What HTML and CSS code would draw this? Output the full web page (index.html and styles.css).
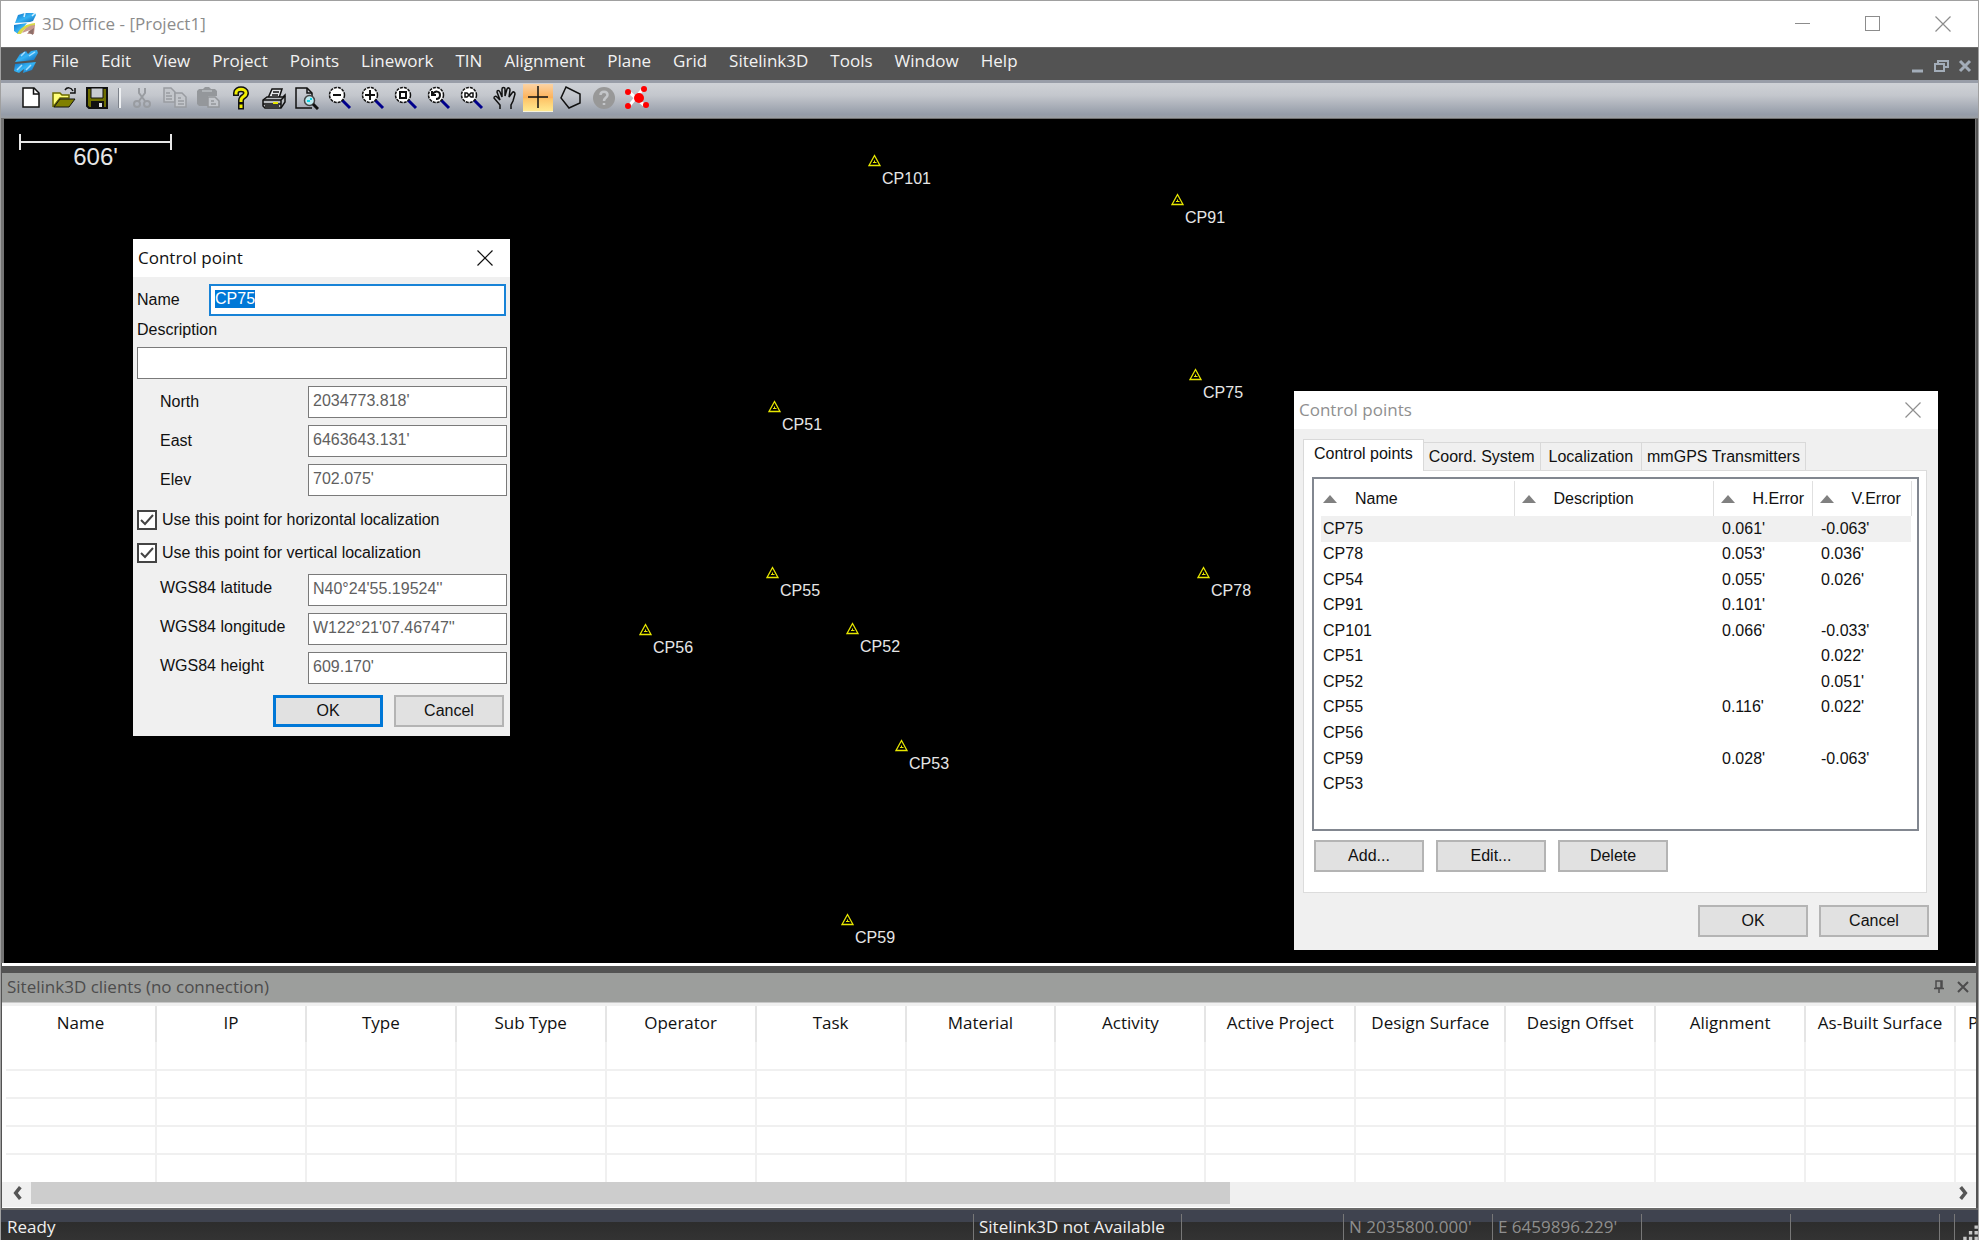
FILE: index.html
```html
<!DOCTYPE html>
<html lang="en">
<head>
<meta charset="utf-8">
<title>3D Office - [Project1]</title>
<link rel="stylesheet" href="styles.css">
</head>
<body>
<svg class="defs" aria-hidden="true">
  <defs>
    <linearGradient id="blue" x1="0" y1="0" x2="1" y2="1">
      <stop offset="0" stop-color="#0d6fc4"/><stop offset=".5" stop-color="#35b4f5"/><stop offset="1" stop-color="#0a5cae"/>
    </linearGradient>
    <symbol id="cone" viewBox="0 0 14 13">
      <path d="M6.500 1.500L12 11.500H1Z" fill="none" stroke="#e6e600" stroke-width="1.300"/>
      <path d="M6.500 6.500V8M5 8.500H8.500" fill="none" stroke="#e6e600"/>
    </symbol>
    <symbol id="lens" viewBox="0 0 24 24">
      <path d="M14 14L22 22" stroke="#00008b" stroke-width="3"/>
      <circle cx="9" cy="9" r="7.500" fill="#fff" stroke="#111" stroke-width="1.500" stroke-dasharray="3 1"/>
    </symbol>
    <symbol id="close" viewBox="0 0 16 16">
      <path d="M.5.5L15.500 15.500M15.500.5L.5 15.500" fill="none" stroke="currentColor" stroke-width="1.200"/>
    </symbol>
  </defs>
</svg>

<div class="app">
  <header class="titlebar">
    <svg class="logo" viewBox="0 0 24 24" aria-hidden="true">
      <path d="M5 3L12 1H22L23 3 20 9 17 10 2 11Z" fill="url(#blue)"/>
      <path d="M12 1L11 5M22 1L19 4" stroke="#d6f1ff" stroke-width="1.500"/>
      <path d="M1 13L14 11 5 22 1 19Z" fill="url(#blue)"/>
      <path d="M4 22C8 15 13 12 22 11L22 14C15 14 11 17 8 22Z" fill="#d8d84a"/>
      <path d="M9 21C12 16 16 13 22 13L21 22 14 22 17 18Z" fill="#c99a90"/>
      <path d="M15 20L21 16 20 23Z" fill="#8d6f6a"/>
    </svg>
    <h1 class="app-title">3D Office - [Project1]</h1>
    <div class="window-controls">
      <button type="button" aria-label="Minimize"><svg viewBox="0 0 16 16"><path d="M0 7.500H15" stroke="currentColor"/></svg></button>
      <button type="button" aria-label="Maximize"><svg viewBox="0 0 16 16"><rect x=".5" y=".5" width="14" height="14" fill="none" stroke="currentColor"/></svg></button>
      <button type="button" aria-label="Close"><svg><use href="#close"/></svg></button>
    </div>
  </header>

  <nav class="menubar">
    <svg class="logo" viewBox="0 0 24 24" aria-hidden="true">
      <path d="M6 4L12 1 14 4 17 1 23 0 24 3 20 10 1 12Z" fill="url(#blue)"/>
      <path d="M1 14L22 12 18 20 9 23 10 19 5 23 0 21Z" fill="url(#blue)"/>
      <path d="M7 6L11 2M15 6L21 2M3 20L8 15M12 20L17 15" fill="none" stroke="#a9e0ff" stroke-width="1.500"/>
    </svg>
    <div class="menus">
      <button type="button">File</button>
      <button type="button">Edit</button>
      <button type="button">View</button>
      <button type="button">Project</button>
      <button type="button">Points</button>
      <button type="button">Linework</button>
      <button type="button">TIN</button>
      <button type="button">Alignment</button>
      <button type="button">Plane</button>
      <button type="button">Grid</button>
      <button type="button">Sitelink3D</button>
      <button type="button">Tools</button>
      <button type="button">Window</button>
      <button type="button">Help</button>
    </div>
    <div class="child-controls">
      <button type="button" aria-label="Minimize project"><svg viewBox="0 0 16 14"><path d="M3 12H14" stroke="currentColor" stroke-width="3"/></svg></button>
      <button type="button" aria-label="Restore project"><svg viewBox="0 0 16 14"><path d="M5 4V2H15V8H12M2 5H11V12H2Z" fill="none" stroke="currentColor" stroke-width="2"/></svg></button>
      <button type="button" aria-label="Close project"><svg viewBox="0 0 16 14"><path d="M3 2L13 12M13 2L3 12" stroke="currentColor" stroke-width="3"/></svg></button>
    </div>
  </nav>

  <div class="toolbar" role="toolbar">
    <button type="button" aria-label="New"><svg viewBox="0 0 24 24"><path d="M4 2H15L20 7V21H4Z" fill="#fff" stroke="#111" stroke-width="1.500"/><path d="M14.500 2V8H20" fill="none" stroke="#111" stroke-width="1.500"/></svg></button>
    <button type="button" aria-label="Open"><svg viewBox="0 0 24 24"><path d="M1 21V7H8L10 9H17V12H8L1 21" fill="#ffff7a" stroke="#6b6b00" stroke-width="1.500"/><path d="M2 21L8 13H23L17 21Z" fill="#808000" stroke="#111"/><path d="M13 4C15 1 19 1 21 5M23 2V7H18" fill="none" stroke="#111" stroke-width="1.500"/></svg></button>
    <button type="button" aria-label="Save"><svg viewBox="0 0 24 24"><path d="M2 2H22V22H4L2 20Z" fill="#6f6f00" stroke="#111" stroke-width="2"/><path d="M6 2H18V12H6Z" fill="#c9ccd1" stroke="#111"/><path d="M6 15H19V22H6Z" fill="#111"/><path d="M14 17H17V21H14Z" fill="#ddd"/></svg></button>
    <span class="tool-separator"></span>
    <button type="button" disabled aria-label="Cut"><svg viewBox="0 0 24 24" fill="none" stroke="#999ca1" stroke-width="2"><path d="M9 2V7L15 15M15 2V7L9 15"/><circle cx="7" cy="18" r="3"/><circle cx="17" cy="18" r="3"/></svg></button>
    <button type="button" disabled aria-label="Copy"><svg viewBox="0 0 24 24" fill="#c3c6cb" stroke="#999ca1" stroke-width="1.500"><path d="M1 2H8L12 6V16H1Z"/><path d="M3 7H7M3 10H9M3 13H9"/><path d="M12 7H19L23 11V21H12Z"/><path d="M15 12H18M15 15H21M15 18H21"/></svg></button>
    <button type="button" disabled aria-label="Paste"><svg viewBox="0 0 24 24"><path d="M1 5L3 3H7L9 1H13L15 3H19L21 5V10H12V20H3L1 18Z" fill="#94979b"/><path d="M6 5H16" stroke="#b9bcc1" stroke-width="1.500"/><path d="M12 11H19L23 15V21H12Z" fill="#c3c6cb" stroke="#94979b" stroke-width="1.500"/><path d="M15 15H18M15 18H20" stroke="#94979b" stroke-width="1.500"/></svg></button>
    <button type="button" aria-label="Help"><svg viewBox="0 0 24 24" fill="none" stroke-linecap="square"><path d="M7 7C7 2 17 2 17 7C17 11 12 10 12 14.500M12 20V20.500" stroke="#111" stroke-width="6"/><path d="M7 7C7 2 17 2 17 7C17 11 12 10 12 14.500M12 20V20.500" stroke="#f2ee00" stroke-width="3"/></svg></button>
    <button type="button" aria-label="Print"><svg viewBox="0 0 24 24" fill="none" stroke="#111" stroke-width="1.500"><path d="M6 12L10 3H20L17 12Z" fill="#e4e6e9"/><path d="M11 6H17M10 9H16"/><path d="M1 14L5 11H21L23 9V16L19 22H3L1 20Z" fill="#b9bcc0"/><path d="M1 14H19L23 10M19 14V22M1 18H19M3 20H17" /><path d="M11 17H16" stroke="#e6e600" stroke-width="2"/></svg></button>
    <button type="button" aria-label="Print preview"><svg viewBox="0 0 24 24"><path d="M17 10V7L12 2H1V22H17" fill="none" stroke="#111" stroke-width="1.500"/><path d="M12 2V7H17" fill="none" stroke="#111" stroke-width="1.500"/><circle cx="14.500" cy="14.500" r="5" fill="#bfeaf0" stroke="#444" stroke-width="1.500"/><path d="M12 15H15M15 13H17" stroke="#12d4e6" stroke-width="2"/><path d="M18 18L23 23" stroke="#111" stroke-width="3"/></svg></button>
    <button type="button" aria-label="Zoom out"><svg viewBox="0 0 24 24"><use href="#lens"/><path d="M5 9H13" stroke="#111" stroke-width="2"/></svg></button>
    <button type="button" aria-label="Zoom in"><svg viewBox="0 0 24 24"><use href="#lens"/><path d="M4 9H14M9 4V14" stroke="#111" stroke-width="2"/></svg></button>
    <button type="button" aria-label="Zoom window"><svg viewBox="0 0 24 24"><use href="#lens"/><path d="M6 6H12V12H6Z" fill="none" stroke="#111" stroke-width="2"/></svg></button>
    <button type="button" aria-label="Zoom previous"><svg viewBox="0 0 24 24"><use href="#lens"/><path d="M5 5V9H9M5 9C8 4 13 5 13 9C13 12 11 13 9 13" fill="none" stroke="#111" stroke-width="2"/></svg></button>
    <button type="button" aria-label="Zoom extents"><svg viewBox="0 0 24 24"><use href="#lens"/><path d="M9 9L7 7H5V11H7L11 7H13V11H11Z" fill="none" stroke="#111" stroke-width="1.500"/></svg></button>
    <button type="button" aria-label="Pan"><svg viewBox="0 0 24 24"><path d="M7 23V19L1 12C1 10 3 10 4 11L7 14L4 6C4 4 6 4 7 6L9 11V3C9 1 12 1 12 3V10L14 3C15 1 17 2 17 4L16 11L19 7C20 5 22 6 22 8L20 15L18 19V23" fill="none" stroke="#111" stroke-width="1.500"/></svg></button>
    <button type="button" class="active" aria-label="Select point" aria-pressed="true"><svg viewBox="0 0 24 24"><path d="M2 12H22M12 1V23" stroke="#111" stroke-width="1.500"/></svg></button>
    <button type="button" aria-label="Select area"><svg viewBox="0 0 24 24"><path d="M7 1L2 12L10 22L21 17V8Z" fill="none" stroke="#111" stroke-width="1.500"/></svg></button>
    <button type="button" disabled aria-label="Query"><svg viewBox="0 0 24 24"><circle cx="12" cy="12" r="11" fill="#989898"/><path d="M8.500 9C8.500 4.500 15.500 4.500 15.500 9C15.500 11.500 12 11.500 12 15M12 17V19" fill="none" stroke="#c4c6c9" stroke-width="2.500"/></svg></button>
    <button type="button" aria-label="Network"><svg viewBox="0 0 24 24"><path d="M4 20L17 4M4 6L19 19" stroke="#fff" stroke-width="3"/><g fill="#f00"><circle cx="14" cy="12" r="5"/><circle cx="3" cy="6" r="3"/><circle cx="19" cy="3" r="3"/><circle cx="3" cy="20" r="3"/><circle cx="21" cy="19" r="3"/></g></svg></button>
  </div>

  <main class="canvas">
    <div class="scale"><div class="scale-bar"></div><span>606'</span></div>

    <div class="point" style="left:864px;top:35px"><svg><use href="#cone"/></svg><span>CP101</span></div>
    <div class="point" style="left:1167px;top:74px"><svg><use href="#cone"/></svg><span>CP91</span></div>
    <div class="point" style="left:1185px;top:249px"><svg><use href="#cone"/></svg><span>CP75</span></div>
    <div class="point" style="left:764px;top:281px"><svg><use href="#cone"/></svg><span>CP51</span></div>
    <div class="point" style="left:762px;top:447px"><svg><use href="#cone"/></svg><span>CP55</span></div>
    <div class="point" style="left:635px;top:504px"><svg><use href="#cone"/></svg><span>CP56</span></div>
    <div class="point" style="left:842px;top:503px"><svg><use href="#cone"/></svg><span>CP52</span></div>
    <div class="point" style="left:1193px;top:447px"><svg><use href="#cone"/></svg><span>CP78</span></div>
    <div class="point" style="left:891px;top:620px"><svg><use href="#cone"/></svg><span>CP53</span></div>
    <div class="point" style="left:837px;top:794px"><svg><use href="#cone"/></svg><span>CP59</span></div>

    <form class="dialog edit-dialog" aria-label="Control point">
      <div class="dialog-title">
        <h2>Control point</h2>
        <button type="button" aria-label="Close"><svg><use href="#close"/></svg></button>
      </div>
      <div class="edit-body">
        <div class="row name-row"><label for="name">Name</label><input id="name" type="text" value="CP75" autofocus></div>
        <label class="desc-label" for="desc">Description</label>
        <input id="desc" type="text">
        <div class="fields">
          <label for="north">North</label><input id="north" type="text" value="2034773.818'" readonly>
          <label for="east">East</label><input id="east" type="text" value="6463643.131'" readonly>
          <label for="elev">Elev</label><input id="elev" type="text" value="702.075'" readonly>
        </div>
        <label class="check"><input type="checkbox" checked>Use this point for horizontal localization</label>
        <label class="check"><input type="checkbox" checked>Use this point for vertical localization</label>
        <div class="fields wgs">
          <label for="lat">WGS84 latitude</label><input id="lat" type="text" value="N40°24'55.19524''" readonly>
          <label for="lon">WGS84 longitude</label><input id="lon" type="text" value="W122°21'07.46747''" readonly>
          <label for="hgt">WGS84 height</label><input id="hgt" type="text" value="609.170'" readonly>
        </div>
        <div class="actions"><button type="button" class="btn default">OK</button><button type="button" class="btn">Cancel</button></div>
      </div>
    </form>

    <section class="dialog list-dialog inactive" aria-label="Control points">
      <div class="dialog-title">
        <h2>Control points</h2>
        <button type="button" aria-label="Close"><svg><use href="#close"/></svg></button>
      </div>
      <div class="list-body">
        <div class="tabs" role="tablist">
          <button type="button" role="tab" aria-selected="true">Control points</button>
          <button type="button" role="tab">Coord. System</button>
          <button type="button" role="tab">Localization</button>
          <button type="button" role="tab">mmGPS Transmitters</button>
        </div>
        <div class="tab-panel" role="tabpanel">
          <div class="list-box">
            <table class="points">
              <colgroup><col class="c-name"><col class="c-desc"><col class="c-err"><col class="c-err"></colgroup>
              <thead><tr><th><span class="sort">Name</span></th><th><span class="sort">Description</span></th><th><span class="sort">H.Error</span></th><th><span class="sort">V.Error</span></th></tr></thead>
              <tbody>
                <tr class="selected"><td>CP75</td><td></td><td>0.061'</td><td>-0.063'</td></tr>
                <tr><td>CP78</td><td></td><td>0.053'</td><td>0.036'</td></tr>
                <tr><td>CP54</td><td></td><td>0.055'</td><td>0.026'</td></tr>
                <tr><td>CP91</td><td></td><td>0.101'</td><td></td></tr>
                <tr><td>CP101</td><td></td><td>0.066'</td><td>-0.033'</td></tr>
                <tr><td>CP51</td><td></td><td></td><td>0.022'</td></tr>
                <tr><td>CP52</td><td></td><td></td><td>0.051'</td></tr>
                <tr><td>CP55</td><td></td><td>0.116'</td><td>0.022'</td></tr>
                <tr><td>CP56</td><td></td><td></td><td></td></tr>
                <tr><td>CP59</td><td></td><td>0.028'</td><td>-0.063'</td></tr>
                <tr><td>CP53</td><td></td><td></td><td></td></tr>
              </tbody>
            </table>
          </div>
          <div class="list-actions"><button type="button" class="btn">Add...</button><button type="button" class="btn">Edit...</button><button type="button" class="btn">Delete</button></div>
        </div>
        <div class="actions"><button type="button" class="btn">OK</button><button type="button" class="btn">Cancel</button></div>
      </div>
    </section>
  </main>

  <section class="panel">
    <div class="panel-title">
      <h2>Sitelink3D clients (no connection)</h2>
      <button type="button" aria-label="Auto hide"><svg viewBox="0 0 14 14"><path d="M4 1H10V8H4ZM9 1V8M2 8.500H12M7 9V13" fill="none" stroke="currentColor" stroke-width="1.500"/></svg></button>
      <button type="button" aria-label="Close panel"><svg viewBox="0 0 14 14"><path d="M2 2L12 12M12 2L2 12" stroke="currentColor" stroke-width="2"/></svg></button>
    </div>
    <div class="clients-wrap">
      <table class="clients">
        <thead><tr><th>Name</th><th>IP</th><th>Type</th><th>Sub Type</th><th>Operator</th><th>Task</th><th>Material</th><th>Activity</th><th>Active Project</th><th>Design Surface</th><th>Design Offset</th><th>Alignment</th><th>As-Built Surface</th><th class="cut">P</th></tr></thead>
        <tbody>
          <tr><td></td><td></td><td></td><td></td><td></td><td></td><td></td><td></td><td></td><td></td><td></td><td></td><td></td><td></td></tr>
          <tr><td></td><td></td><td></td><td></td><td></td><td></td><td></td><td></td><td></td><td></td><td></td><td></td><td></td><td></td></tr>
          <tr><td></td><td></td><td></td><td></td><td></td><td></td><td></td><td></td><td></td><td></td><td></td><td></td><td></td><td></td></tr>
          <tr><td></td><td></td><td></td><td></td><td></td><td></td><td></td><td></td><td></td><td></td><td></td><td></td><td></td><td></td></tr>
          <tr><td></td><td></td><td></td><td></td><td></td><td></td><td></td><td></td><td></td><td></td><td></td><td></td><td></td><td></td></tr>
        </tbody>
      </table>
    </div>
    <div class="scrollbar">
      <button type="button" aria-label="Scroll left"><svg viewBox="0 0 12 12"><path d="M8 1L4 6L8 11" fill="none" stroke="currentColor" stroke-width="3"/></svg></button>
      <div class="track"><div class="thumb"></div></div>
      <button type="button" aria-label="Scroll right"><svg viewBox="0 0 12 12"><path d="M4 1L8 6L4 11" fill="none" stroke="currentColor" stroke-width="3"/></svg></button>
    </div>
  </section>

  <footer class="status">
    <span class="ready">Ready</span>
    <span class="w-link">Sitelink3D not Available</span>
    <span class="w-wide"></span>
    <span class="w-coord dim">N 2035800.000'</span>
    <span class="w-coord dim">E 6459896.229'</span>
    <span class="w-coord"></span>
    <span class="w-coord"></span>
    <span class="w-tiny"></span>
    <span class="w-grip"><svg viewBox="0 0 16 16" aria-hidden="true"><path d="M12 3h3v3h-3zM12 8h3v3h-3zM7 8h3v3h-3zM12 13h3v3h-3zM7 13h3v3h-3zM2 13h3v3h-3z" fill="#c8c8c8"/></svg></span>
  </footer>
</div>
<script src="app.js"></script>
</body>
</html>
```
FILE: styles.css
```css
* { box-sizing: border-box; }

body {
  margin: 0;
  font-family: "Open Sans", "Noto Sans", sans-serif;
  font-size: 17px;
  line-height: 24px;
}

button {
  border: 0;
  padding: 0;
  background: none;
  font: inherit;
  color: inherit;
}

h1, h2 { margin: 0; font-size: 17px; font-weight: 400; }
svg { display: block; }
.defs { position: absolute; width: 0; height: 0; }

.app {
  display: flex;
  flex-direction: column;
  min-height: 100vh;
  border: 1px solid #a0a0a0;
  border-bottom: 0;
  background: #535353;
  overflow: hidden;
}

/* Window title */
.titlebar {
  display: flex;
  align-items: center;
  height: 46px;
  padding-left: 12px;
  background: #fff;
  color: #8c8c8c;
}
.logo { width: 24px; height: 24px; flex: none; }
.app-title { flex: 1; padding-left: 5px; }
.window-controls { display: flex; color: #8c8c8c; }
.window-controls button { width: 70px; height: 44px; display: grid; place-items: center; }
.window-controls svg { width: 16px; height: 16px; }

/* Menu */
.menubar {
  display: flex;
  align-items: center;
  height: 33px;
  padding: 0 3px 4px 13px;
  border-top: 1px solid #6a6a6a;
  background: #535353;
  color: #f2f2f2;
}
.menus { display: flex; flex: 1; gap: 22px; padding-left: 14px; }
.menus button { height: 26px; padding-bottom: 2px; }
.child-controls { display: flex; align-self: flex-end; gap: 4px; color: #a3adb9; }
.child-controls button { width: 20px; height: 17px; display: grid; place-items: start center; }
.child-controls svg { width: 16px; height: 14px; }

/* Toolbar */
.toolbar {
  display: flex;
  align-items: center;
  gap: 3px;
  height: 39px;
  padding: 0 15px 6px;
  border-top: 3px solid #989da8;
  border-bottom: 1px solid #6e6e6e;
  background: linear-gradient(#cfd2d7, #c4c7cd 35%, #959ca8 90%, #9a9ea3);
}
.toolbar button { width: 30px; height: 28px; display: grid; place-items: center; }
.toolbar svg { width: 24px; height: 24px; }
.toolbar .active {
  background: linear-gradient(#fbd3a4, #fdb35c 50%, #fdc468 55%, #ffe98f);
  border-bottom: 1px solid #f7f3dc;
}
.tool-separator { width: 3px; height: 20px; margin: 0 3px; border-left: 1px solid #7d828b; background: #eef0f2; }

/* Drawing area */
.canvas {
  position: relative;
  flex: 1;
  min-height: 843px;
  margin: 0 2px 0 0;
  border: solid #747474;
  border-width: 0 1px 0 3px;
  background: #000;
  color: #e6e6e6;
  font: 16px/20px "Liberation Sans", Arial, sans-serif;
}
.scale { position: absolute; left: 15px; top: 15px; width: 153px; text-align: center; font-size: 24px; line-height: 28px; }
.scale-bar { height: 16px; margin-bottom: -7px; border: solid #e6e6e6; border-width: 0 2px; background: linear-gradient(#e6e6e6, #e6e6e6) center / 100% 2px no-repeat; }
.point { position: absolute; display: grid; gap: 2px; }
.point svg { width: 14px; height: 13px; }
.point span { padding-left: 14px; }

/* Dialogs */
.dialog { position: absolute; background: #f0f0f0; color: #111; font-size: 16px; }
.dialog-title {
  display: flex;
  justify-content: space-between;
  align-items: center;
  height: 38px;
  padding: 0 17px 0 5px;
  background: #fff;
  font-family: "Open Sans", "Noto Sans", sans-serif;
}
.dialog-title svg { width: 16px; height: 16px; }
.dialog.inactive .dialog-title { color: #8f8f8f; }
.btn {
  width: 110px;
  height: 32px;
  border: 2px solid #b4b4b4;
  background: #e1e1e1;
}
.btn.default { border: 3px solid #0078d7; }
.actions { display: flex; justify-content: flex-end; gap: 11px; }

.edit-dialog { left: 129px; top: 120px; width: 377px; }
.edit-body { padding: 7px 3px 9px 4px; }
.edit-body input[type="text"] {
  width: 100%;
  height: 32px;
  padding: 0 4px 2px;
  border: 1px solid #7a7a7a;
  border-radius: 0;
  background: #fff;
  color: #111;
  font: inherit;
  outline: 0;
}
.edit-body input[readonly] { color: #606060; }
.name-row { display: grid; grid-template-columns: 72px 1fr; align-items: center; padding-right: 1px; }
.edit-body #name { border: 2px solid #1883d7; }
#name::selection { background: #0078d7; color: #fff; }
.desc-label { display: block; padding: 4px 0 7px; }
.fields {
  display: grid;
  grid-template-columns: 148px 1fr;
  gap: 7px 0;
  padding: 7px 0 7px 23px;
  align-items: center;
}
.fields.wgs { padding-top: 5px; }
.fields.wgs label { padding-bottom: 4px; }
.check { display: flex; align-items: center; gap: 5px; height: 33px; }
.check input {
  appearance: none;
  width: 20px;
  height: 20px;
  margin: 0;
  border: 2px solid #444;
  background: #fff url("data:image/svg+xml,%3Csvg xmlns='http://www.w3.org/2000/svg' viewBox='0 0 16 16'%3E%3Cpath d='M2 8l4 4 8-9' fill='none' stroke='%23444' stroke-width='2'/%3E%3C/svg%3E") center / 16px;
}
.edit-dialog .actions { padding: 4px 3px 0 0; }

.list-dialog { left: 1290px; top: 272px; width: 644px; }
.list-body { padding: 10px 9px 13px 9px; }
.tabs { display: flex; align-items: flex-end; }
.tabs button {
  height: 28px;
  padding: 0 5px;
  border: 1px solid #d9d9d9;
  border-width: 1px 1px 0 0;
  white-space: nowrap;
}
.tabs [aria-selected="true"] { height: 32px; padding: 0 10px 4px; border-left-width: 1px; background: #fff; margin-bottom: -1px; }
.tabs button:nth-child(3) { padding: 0 8px; }
.tab-panel { margin-right: 2px; padding: 6px 7px 20px 8px; border: 1px solid #dcdcdc; background: #fff; }
.list-box { height: 354px; padding: 2px 7px 0; border: 2px solid #828790; }
.points { width: 100%; height: 316px; table-layout: fixed; border-collapse: collapse; }
.points th { height: 35px; padding: 0 0 0 7px; border-right: 1px solid #e0e0e0; font-weight: 400; text-align: left; }
.points td { padding: 0 0 0 9px; }
.points th:first-child, .points td:first-child { padding-left: 2px; }
.points .selected { background: #f0f0f0; }
.c-name { width: 193px; }
.c-desc { width: 199px; }
.c-err { width: 99px; }
.sort { display: flex; align-items: center; gap: 18px; }
.sort::before { content: ""; border: 7px solid transparent; border-top: 0; border-bottom: 8px solid #808080; }
.list-actions { display: flex; gap: 12px; padding: 9px 2px 0; }
.list-body > .actions { padding-top: 12px; }

/* Clients panel */
.panel {
  margin: 0 2px 0 1px;
  border-top: 3px solid #fff;
  background: #f0f0f0;
}
.panel-title {
  display: flex;
  align-items: center;
  gap: 10px;
  height: 37px;
  padding: 0 6px 2px 5px;
  border-top: 7px solid #535353;
  border-bottom: 1px solid #c8c8c8;
  background: #9c9e9c;
  color: #4c4c4c;
}
.panel-title h2 { flex: 1; }
.panel-title svg { width: 14px; height: 14px; }
.clients-wrap { overflow: hidden; margin-top: 3px; padding-left: 4px; background: #fff; }
.clients { width: 2100px; table-layout: fixed; border-collapse: collapse; }
.clients th { height: 36px; padding: 0 0 2px; border-right: 2px solid #e5e5e5; font-weight: 400; color: #111; }
.clients .cut { padding-left: 12px; text-align: left; }
.clients td { height: 28px; padding: 0; border: solid #f0f0f0; border-width: 0 2px 2px 0; }
.clients tbody tr:last-child td { border-bottom: 0; }
.scrollbar { display: flex; height: 26px; padding: 0 0 3px 3px; border-bottom: 1px solid #fff; color: #555; }
.scrollbar button { width: 26px; display: grid; place-items: center; }
.scrollbar svg { width: 14px; height: 14px; }
.track { flex: 1; }
.thumb { width: 62.5%; height: 100%; background: #cdcdcd; }

/* Status bar */
.status {
  display: flex;
  height: 32px;
  border-top: 2px solid #6a6a6a;
  background: linear-gradient(#3f434f 0 12px, #2d2d2d 12px, #333);
  color: #f0f0f0;
  line-height: 32px;
  white-space: nowrap;
}
.status span { border-left: 1px solid #777; margin-top: 4px; line-height: 26px; padding-left: 5px; }
.status .ready { flex: 1; border: 0; padding-left: 6px; }
.status .w-link { width: 208px; }
.status .w-wide { width: 162px; }
.status .w-coord { width: 149px; }
.status .w-tiny { width: 15px; }
.status .w-grip { width: 24px; padding: 8px 0 0 6px; }
.status .w-grip svg { width: 18px; height: 18px; }
.status .dim { color: #8e8e8e; }
```
FILE: app.js
```javascript
// Open with the point's name ready to be overtyped.
const nameField = document.getElementById("name");
nameField.focus();
nameField.select();
```
